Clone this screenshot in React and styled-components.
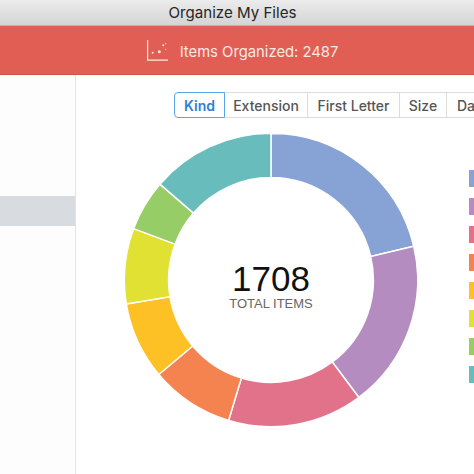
import React from "react";
import styled, { createGlobalStyle } from "styled-components";

const GlobalStyle = createGlobalStyle`
  html, body {
    margin: 0;
    padding: 0;
    background: #ffffff;
  }
  * {
    box-sizing: border-box;
  }
`;

const Window = styled.div`
  width: 474px;
  height: 474px;
  overflow: hidden;
  display: flex;
  flex-direction: column;
  font-family: "Inter", "Liberation Sans", sans-serif;
`;

const TitleBar = styled.div`
  height: 26px;
  flex: none;
  display: flex;
  align-items: center;
  justify-content: center;
  padding-right: 9px;
  background: linear-gradient(#ececec, #d4d4d4);
  border-bottom: 1px solid #b4b4b4;
  color: #262626;
  font-size: 15.1px;
`;

const Banner = styled.div`
  height: 49px;
  flex: none;
  display: flex;
  align-items: center;
  justify-content: center;
  gap: 12px;
  padding-left: 11px;
  background: #e05e53;
  border-bottom: 1px solid #cf5449;
  color: #fbe9e7;
  font-size: 14.8px;
`;

const BannerLabel = styled.span`
  padding-top: 4px;
`;

const Body = styled.div`
  flex: 1;
  display: flex;
  min-height: 0;
`;

const Sidebar = styled.div`
  width: 76px;
  flex: none;
  padding-top: 121px;
  background: #fdfdfd;
  border-right: 1px solid #e3e3e3;
`;

const SidebarRow = styled.div`
  height: 30px;
  background: ${(p) => (p.$selected ? "#d8dce0" : "transparent")};
`;

const Main = styled.div`
  flex: 1;
  min-width: 0;
  padding: 17px 0 0 98px;
`;

const Tabs = styled.div`
  display: flex;
  width: 320px;
  height: 26px;
`;

const Tab = styled.div`
  width: ${(p) => p.$width}px;
  flex: none;
  display: flex;
  align-items: center;
  justify-content: ${(p) => (p.$clipped ? "flex-start" : "center")};
  padding-left: ${(p) => (p.$clipped ? "10px" : "0")};
  font-size: 14px;
  font-weight: ${(p) => (p.$active ? 600 : 500)};
  color: ${(p) => (p.$active ? "#2a7fd6" : "#555555")};
  background: #ffffff;
  border: 1px solid ${(p) => (p.$active ? "#5aa5e6" : "#dcdcdc")};
  border-left-width: ${(p) => (p.$active ? "1px" : "0")};
  border-radius: ${(p) => (p.$active ? "4px 0 0 4px" : "0")};
`;

const ChartRow = styled.div`
  display: flex;
  align-items: flex-start;
  margin: 16px 0 0 -49px;
`;

const Donut = styled.div`
  position: relative;
  width: 292px;
  height: 292px;
  flex: none;
`;

const DonutCenter = styled.div`
  position: absolute;
  top: 127px;
  left: 0;
  right: 0;
  display: flex;
  flex-direction: column;
  align-items: center;
  font-family: "Liberation Sans", Arial, sans-serif;
`;

const Total = styled.div`
  font-size: 35px;
  line-height: 36px;
  color: #111111;
`;

const TotalLabel = styled.div`
  font-size: 13px;
  line-height: 14px;
  color: #666666;
`;

const Legend = styled.div`
  display: flex;
  flex-direction: column;
  gap: 11px;
  margin: 36px 0 0 52px;
`;

const Swatch = styled.div`
  width: 16px;
  height: 17px;
  flex: none;
  background: ${(p) => p.$color};
`;

const TABS = [
  { label: "Kind", width: 51, active: true },
  { label: "Extension", width: 83 },
  { label: "First Letter", width: 92 },
  { label: "Size", width: 47 },
  { label: "Date", width: 60, clipped: true },
];

const SLICES = [
  { color: "#87a2d4", end: 76.7 },
  { color: "#b48cc0", end: 143.2 },
  { color: "#e2728a", end: 196.8 },
  { color: "#f58350", end: 229.9 },
  { color: "#fdc125", end: 260.6 },
  { color: "#e1e133", end: 290.5 },
  { color: "#96cd67", end: 310.8 },
  { color: "#69bcbc", end: 360 },
];

const OUTER = 146.7;
const INNER = 102.4;

const point = (r, deg) => {
  const rad = (deg * Math.PI) / 180;
  return `${(146 + r * Math.sin(rad)).toFixed(2)} ${(146 - r * Math.cos(rad)).toFixed(2)}`;
};

const slicePath = (start, end) => {
  const large = end - start > 180 ? 1 : 0;
  return [
    `M${point(OUTER, start)}`,
    `A${OUTER} ${OUTER} 0 ${large} 1 ${point(OUTER, end)}`,
    `L${point(INNER, end)}`,
    `A${INNER} ${INNER} 0 ${large} 0 ${point(INNER, start)}`,
    "Z",
  ].join(" ");
};

const ScatterIcon = () => (
  <svg width="21" height="21" viewBox="0 0 21 21" fill="none">
    <path d="M0.6 0V20.2H21" stroke="#fbe9e7" strokeWidth="1.2" />
    <circle cx="5.7" cy="12.7" r="1" fill="#fbe9e7" />
    <circle cx="12.3" cy="11.7" r="1.5" fill="#fbe9e7" />
    <circle cx="16.3" cy="5.3" r="1" fill="#fbe9e7" />
    <circle cx="18.7" cy="3.7" r="0.6" fill="#fbe9e7" />
    <circle cx="18.7" cy="9.3" r="0.6" fill="#fbe9e7" />
  </svg>
);

const App = () => {
  return (
    <Window>
      <GlobalStyle />
      <TitleBar>Organize My Files</TitleBar>
      <Banner>
        <ScatterIcon />
        <BannerLabel>Items Organized: 2487</BannerLabel>
      </Banner>
      <Body>
        <Sidebar>
          <SidebarRow $selected />
        </Sidebar>
        <Main>
          <Tabs>
            {TABS.map((t) => (
              <Tab key={t.label} $width={t.width} $active={t.active} $clipped={t.clipped}>
                {t.label}
              </Tab>
            ))}
          </Tabs>
          <ChartRow>
            <Donut>
              <svg width="292" height="292" viewBox="0 0 292 292">
                {SLICES.map((s, i) => (
                  <path
                    key={s.color}
                    d={slicePath(i === 0 ? 0 : SLICES[i - 1].end, s.end)}
                    fill={s.color}
                    stroke="#ffffff"
                    strokeWidth="1.5"
                  />
                ))}
              </svg>
              <DonutCenter>
                <Total>1708</Total>
                <TotalLabel>TOTAL ITEMS</TotalLabel>
              </DonutCenter>
            </Donut>
            <Legend>
              {SLICES.map((s) => (
                <Swatch key={s.color} $color={s.color} />
              ))}
            </Legend>
          </ChartRow>
        </Main>
      </Body>
    </Window>
  );
};

export default App;
